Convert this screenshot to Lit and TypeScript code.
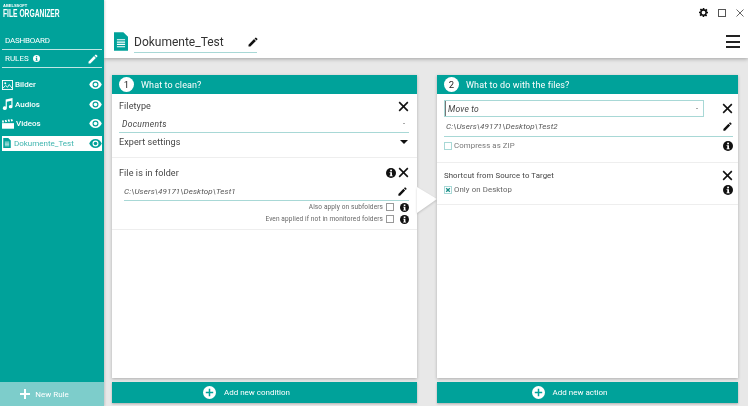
import { LitElement, html, css } from "lit";
import { customElement } from "lit/decorators.js";

const pencil = (c = "#111", s = 13) => html`<svg class="ic" width=${s} height=${s} viewBox="0 0 24 24"><path fill=${c} d="M3 17.25V21h3.75L17.81 9.94l-3.75-3.75L3 17.25zM20.71 7.04a1 1 0 0 0 0-1.41l-2.34-2.34a1 1 0 0 0-1.41 0l-1.83 1.83 3.75 3.75 1.83-1.83z"/></svg>`;
const closeX = (s = 14) => html`<svg class="ic" width=${s} height=${s} viewBox="0 0 14 14"><path d="M1.5 1.5 12.5 12.5M12.5 1.5 1.5 12.5" stroke="#111" stroke-width="2" fill="none"/></svg>`;
const info = (s = 11, bg = "#111", fg = "#fff") => html`<svg class="ic" width=${s} height=${s} viewBox="0 0 12 12"><circle cx="6" cy="6" r="6" fill=${bg}/><rect x="5" y="2" width="2.2" height="2" fill=${fg}/><path d="M4.3 5h2.9v3.9h.9V10H4.2V8.900h.9V6.100h-.8z" fill=${fg}/></svg>`;
const eye = (c = "#fff") => html`<svg class="ic" width="13" height="9" viewBox="0 0 14 10"><path fill-rule="evenodd" fill=${c} d="M7 0C3.800 0 1.200 2 0 5c1.200 3 3.800 5 7 5s5.800-2 7-5c-1.200-3-3.800-5-7-5zm0 1.700a3.300 3.300 0 1 1 0 6.600 3.300 3.300 0 0 1 0-6.600z"/><circle cx="7" cy="5" r="2" fill=${c}/></svg>`;
const doc = (c: string, w = 9, h = 12) => html`<svg class="ic" width=${w} height=${h} viewBox="0 0 12 16"><path fill=${c} d="M0 0h8l4 4v12H0z"/><path stroke="#fff" stroke-width="1" d="M2.500 6.500h7M2.500 8.500h7M2.500 10.500h7M2.500 12.500h7" fill="none"/></svg>`;
const plusCircle = html`<svg class="ic" width="13" height="13" viewBox="0 0 13 13"><circle cx="6.500" cy="6.500" r="6.500" fill="#fff"/><path d="M6.500 2.800v7.400M2.800 6.500h7.400" stroke="#00a29a" stroke-width="1.500"/></svg>`;
const picture = html`<svg class="ic" width="11" height="10" viewBox="0 0 12 11"><rect x=".5" y=".5" width="11" height="10" fill="none" stroke="#fff"/><circle cx="3.500" cy="3.500" r="1.100" fill="#fff"/><path d="M1 9l3-3 2 2 2-3 3 4" fill="none" stroke="#fff"/></svg>`;
const music = html`<svg class="ic" width="11" height="12" viewBox="0 0 12 13"><path fill="#fff" d="M4 1.500 11.500 0v9.500a2 1.700 0 1 1-1.300-1.600V3L5.300 4v7a2.200 1.900 0 1 1-1.300-1.700z"/></svg>`;
const film = html`<svg class="ic" width="12" height="10" viewBox="0 0 14 11"><path fill="#fff" d="M0 4.500h14V11H0z"/><path fill="#fff" d="M0 1.800 1.500.8l1 2.700-2 .5zM3.200 1l1.800-.6 1 2.600-2 .6zM6.600.4 8.500 0l.9 2.500-2 .5zM10 0l2 .1.800 2-2 .4z"/></svg>`;
const gear = html`<svg class="ic" width="9" height="9" viewBox="0 0 24 24"><path fill-rule="evenodd" fill="#111" d="M10 0h4l.7 3.500 2 .8 3-2 2.800 2.800-2 3 .8 2L24 10v4l-3.500.7-.8 2 2 3-2.800 2.800-3-2-2 .8L14 24h-4l-.7-3.500-2-.8-3 2-2.800-2.800 2-3-.8-2L0 14v-4l3.500-.7.800-2-2-3 2.800-2.800 3 2 2-.8zM12 7a5 5 0 1 0 0 10 5 5 0 0 0 0-10z"/></svg>`;
const checked = html`<svg class="ic" width="8" height="8" viewBox="0 0 8 8"><rect x=".5" y=".5" width="7" height="7" fill="#fff" stroke="#a8d8d6"/><path d="M2.200 2.200l3.600 3.600M5.800 2.200 2.200 5.800" stroke="#1a8f89" stroke-width="1.300"/></svg>`;

@customElement("app-root")
export class AppRoot extends LitElement {
  static styles = css`
    :host { display: block; width: 748px; height: 406px; overflow: hidden; font-family: Roboto, "Liberation Sans", sans-serif; color: #444; background: #e8e8e8; }
    .ic { display: block; flex: none; }
    .app { display: flex; height: 406px; }
    .side { width: 104px; flex: none; background: #00a29a; display: flex; flex-direction: column; color: #fff; box-shadow: 1px 0 2px rgba(0,0,0,.15); position: relative; z-index: 2; }
    .soft { filter: blur(.3px); }
    .logo { height: 31px; padding: 3px 0 0 3px; box-sizing: border-box; line-height: 1; }
    .logo small { display: block; font: 700 4px/5px "Liberation Sans", sans-serif; }
    .logo b { display: block; font: 700 11px/10px "Liberation Sans", sans-serif; transform: scaleX(.61); transform-origin: left; white-space: nowrap; }
    .nav { margin: 0 2px; font-size: 8px; height: 18px; display: flex; align-items: center; padding: 0 3px; box-sizing: border-box; }
    .dash { height: 19px; border-bottom: 1px solid #bfe6e4; letter-spacing: -.2px; }
    .rules { height: 18px; gap: 4px; border-bottom: 1px solid #bfe6e4; }
    .rules .sp { flex: 1; }
    .list { margin-top: 7px; display: flex; flex-direction: column; }
    .item { height: 19.500px; display: flex; align-items: center; margin: 0 2px; gap: 2px; font-size: 8px; font-weight: 500; }
    .item .sp { flex: 1; }
    .item.sel { background: #fff; color: #3fb5af; height: 15px; margin-top: 2px; font-weight: 400; padding-left: 1px; gap: 3px; }
    .grow { flex: 1; }
    .new { height: 24px; background: #7dcdcb; display: flex; align-items: center; justify-content: center; gap: 5px; font-size: 8px; font-weight: 400; padding-right: 15px; box-sizing: border-box; }
    .main { flex: 1; display: flex; flex-direction: column; min-width: 0; }
    .head { height: 58px; flex: none; background: #fff; box-shadow: 0 1px 4px rgba(0,0,0,.3); position: relative; z-index: 1; display: flex; flex-direction: column; }
    .win { height: 25px; display: flex; justify-content: flex-end; align-items: center; gap: 10px; padding: 0 4px 0 0; }
    .sq { width: 6px; height: 6px; border: 1px solid #555; }
    .titlebar { display: flex; align-items: center; padding: 0 8px 0 10px; height: 33px; }
    .tname { margin-left: 6px; width: 123px; height: 20px; line-height: 18px; font-size: 12px; color: #333; border-bottom: 1px solid #a8d8d6; box-sizing: border-box; margin-top: 3px; }
    .tpen { margin-left: -10px; }
    .tsp { flex: 1; }
    .burger { width: 14px; height: 13px; border-top: 2px solid #222; border-bottom: 2px solid #222; position: relative; box-sizing: border-box; }
    .burger::after { content: ""; position: absolute; left: 0; right: 0; top: 3.500px; height: 2px; background: #222; }
    .cols { flex: 1; display: flex; gap: 20px; padding: 17px 10px 3px 8px; min-height: 0; }
    .col { display: flex; flex-direction: column; gap: 4px; min-width: 0; position: relative; }
    .col.l { width: 305px; } .col.r { width: 301px; }
    .card { flex: 1; background: #fff; box-shadow: 0 1px 3px rgba(0,0,0,.25); display: flex; flex-direction: column; }
    .chead { height: 19px; flex: none; background: #00a29a; color: #fff; display: flex; align-items: center; gap: 7px; padding-left: 7px; font-size: 9px; font-weight: 400; letter-spacing: .1px; }
    .num { width: 15px; height: 15px; border-radius: 50%; background: #fff; color: #222; font-size: 9.500px; display: flex; align-items: center; justify-content: center; }
    .add { height: 21px; flex: none; background: #00a29a; color: #fff; display: flex; align-items: center; justify-content: center; gap: 8px; font-size: 8px; font-weight: 400; box-shadow: 0 1px 2px rgba(0,0,0,.25); padding-right: 36px; box-sizing: border-box; }
    .sec { padding: 0 8px 0 7px; border-bottom: 1px solid #eee; }
    .row { display: flex; align-items: center; justify-content: space-between; }
    .lbl { font-size: 9px; color: #444; letter-spacing: .1px; }
    .sel1 { font-size: 8.500px; font-style: italic; color: #444; border-bottom: 1px solid #a8d8d6; height: 18px; box-sizing: border-box; display: flex; align-items: center; justify-content: space-between; padding: 0 4px 0 3px; letter-spacing: .3px; }
    .caret { width: 0; height: 0; border-left: 1.500px solid transparent; border-right: 1.500px solid transparent; border-top: 1.500px solid #555; }
    .bigcaret { width: 0; height: 0; border-left: 4.500px solid transparent; border-right: 4.500px solid transparent; border-top: 4.500px solid #111; margin-right: 1px; }
    .s1 { height: 64px; padding-top: 3px; box-sizing: border-box; }
    .s1 .r1 { height: 18px; } .s1 .r3 { height: 18px; }
    .s2 { height: 72px; padding-top: 7px; box-sizing: border-box; }
    .s2 .r1 { height: 15px; }
    .acts { display: flex; gap: 2px; align-items: center; }
    .path { margin-left: 5px; padding: 3px 1px 0 0; height: 21px; box-sizing: border-box; border-bottom: 1px solid #a8d8d6; display: flex; align-items: center; justify-content: space-between; font-size: 8px; font-style: italic; color: #555; letter-spacing: .1px; }
    .opt { display: flex; align-items: center; justify-content: flex-end; gap: 2px; font-size: 6.500px; color: #666; height: 12px; letter-spacing: .12px; }
    .cb { width: 6px; height: 6px; border: 1px solid #999; background: #fff; margin: 0 4px 0 1px; flex: none; }
    .r-s1 { height: 69px; padding: 6px 5px 0 7px; box-sizing: border-box; }
    .movewrap { display: flex; align-items: center; justify-content: space-between; }
    .move { width: 260px; height: 17px; box-sizing: border-box; border: 1px solid #a8d8d6; box-shadow: inset 1px 0 0 #777; display: flex; align-items: center; justify-content: space-between; padding: 0 5px 0 3px; font-size: 8.500px; font-style: italic; color: #444; letter-spacing: .2px; }
    .rpath { height: 20px; box-sizing: border-box; border-bottom: 1px solid #a8d8d6; display: flex; align-items: center; justify-content: space-between; font-size: 8px; font-style: italic; color: #555; letter-spacing: .1px; padding-left: 2px; }
    .zip { display: flex; align-items: center; justify-content: space-between; height: 17px; font-size: 7.800px; color: #777; letter-spacing: .1px; }
    .zl { display: flex; align-items: center; gap: 2px; }
    .box { width: 6px; height: 6px; border: 1px solid #a8d8d6; background: #fff; flex: none; }
    .r-s2 { height: 42px; padding: 5px 5px 0 7px; box-sizing: border-box; }
    .lbl2 { font-size: 7.800px; color: #444; letter-spacing: .1px; }
    .lbl2.dim { color: #666; }
    .r-s2 .row { height: 15px; }
    .r-s2 .row + .row { height: 13px; }
    .arrow { position: absolute; left: 305px; top: 112px; width: 20px; height: 26px; overflow: visible; filter: drop-shadow(0 1px 1px rgba(0,0,0,.18)); }
  `;
  render() {
    return html`<div class="app">
      <aside class="side">
        <div class="soft"><div class="logo"><small>ABELSSOFT</small><b>FILE ORGANIZER</b></div>
        <div class="nav dash">DASHBOARD</div>
        <div class="nav rules"><span>RULES</span>${info(7, "#fff", "#00a29a")}<span class="sp"></span>${pencil("#fff", 12)}</div>
        <div class="list">
          <div class="item">${picture}<span>Bilder</span><span class="sp"></span>${eye()}</div>
          <div class="item">${music}<span>Audios</span><span class="sp"></span>${eye()}</div>
          <div class="item">${film}<span>Videos</span><span class="sp"></span>${eye()}</div>
          <div class="item sel">${doc("#00a29a", 8, 10)}<span>Dokumente_Test</span><span class="sp"></span>${eye("#00a29a")}</div>
        </div></div>
        <div class="grow"></div>
        <div class="new soft"><svg class="ic" width="10" height="10" viewBox="0 0 10 10"><path d="M5 0v10M0 5h10" stroke="#fff" stroke-width="2"/></svg><span>New Rule</span></div>
      </aside>
      <main class="main">
        <header class="head">
          <div class="win">${gear}<div class="sq"></div><svg class="ic" width="8" height="8" viewBox="0 0 8 8"><path d="M.5.5l7 7M7.500.5l-7 7" stroke="#666" fill="none"/></svg></div>
          <div class="titlebar">${doc("#00a29a", 14, 19)}<div class="tname soft">Dokumente_Test</div><span class="tpen">${pencil("#111", 12)}</span><div class="tsp"></div><div class="burger"></div></div>
        </header>
        <div class="cols soft">
          <section class="col l">
            <div class="card">
              <div class="chead"><span class="num">1</span><span>What to clean?</span></div>
              <div class="sec s1">
                <div class="row r1"><span class="lbl">Filetype</span>${closeX(11)}</div>
                <div class="sel1"><span>Documents</span><span class="caret"></span></div>
                <div class="row r3"><span class="lbl">Expert settings</span><span class="bigcaret"></span></div>
              </div>
              <div class="sec s2">
                <div class="row r1"><span class="lbl">File is in folder</span><span class="acts">${info(10)}${closeX(11)}</span></div>
                <div class="path"><span>C:\\Users\\49171\\Desktop\\Test1</span>${pencil("#111", 11)}</div>
                <div class="opt"><span>Also apply on subfolders</span><span class="cb"></span>${info(9)}</div>
                <div class="opt"><span>Even applied if not in monitored folders</span><span class="cb"></span>${info(9)}</div>
              </div>
            </div>
            <div class="add">${plusCircle}<span>Add new condition</span></div>
            <svg class="arrow" viewBox="0 0 20 26"><path d="M0 0 20 12 0 26z" fill="#fff"/></svg>
          </section>
          <section class="col r">
            <div class="card">
              <div class="chead"><span class="num">2</span><span>What to do with the files?</span></div>
              <div class="sec r-s1">
                <div class="movewrap"><div class="move"><span>Move to</span><span class="caret"></span></div>${closeX(11)}</div>
                <div class="rpath"><span>C:\\Users\\49171\\Desktop\\Test2</span>${pencil("#111", 11)}</div>
                <div class="zip"><span class="zl"><span class="box"></span><span>Compress as ZIP</span></span>${info(10)}</div>
              </div>
              <div class="sec r-s2">
                <div class="row"><span class="lbl2">Shortcut from Source to Target</span>${closeX(11)}</div>
                <div class="row"><span class="zl lbl2 dim">${checked}<span>Only on Desktop</span></span>${info(10)}</div>
              </div>
            </div>
            <div class="add">${plusCircle}<span>Add new action</span></div>
          </section>
        </div>
      </main>
    </div>`;
  }
}
